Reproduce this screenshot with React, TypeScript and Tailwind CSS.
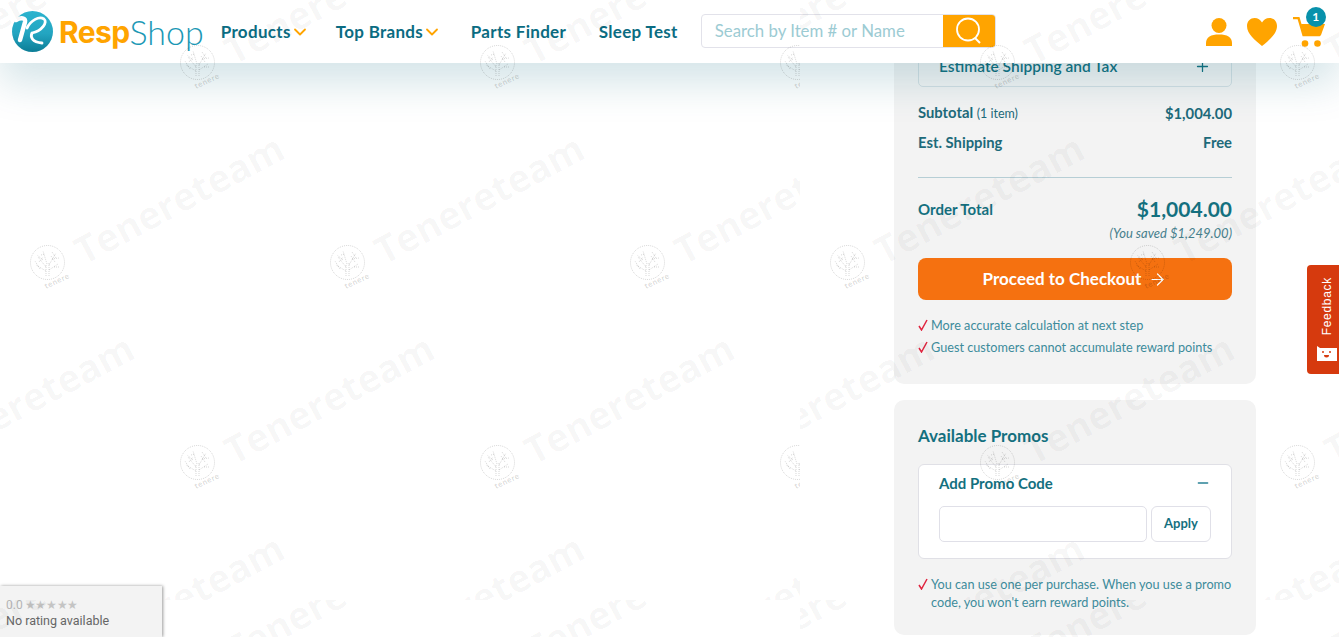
import { ChevronDown, Plus, Minus, ArrowRight } from "lucide-react";

const sans = "font-['Lato','Open_Sans',sans-serif]";

// watermark spots inside one 800x600 tile (logo top-left corner)
const marks = [
  { x: -120, y: 45 }, { x: 180, y: 45 }, { x: 480, y: 45 }, { x: 780, y: 45 },
  { x: 30, y: 245 }, { x: 330, y: 245 }, { x: 630, y: 245 },
  { x: -120, y: 445 }, { x: 180, y: 445 }, { x: 480, y: 445 }, { x: 780, y: 445 },
  { x: 30, y: 645 }, { x: 330, y: 645 }, { x: 630, y: 645 },
];
const tiles = [
  { x: 0, y: 0 }, { x: 800, y: 0 }, { x: 0, y: 600 }, { x: 800, y: 600 },
];

const WatermarkLogo = () => (
  <svg width="44" height="46" viewBox="0 0 44 46" fill="none" stroke="#000" strokeOpacity="0.2" strokeWidth="0.8" strokeDasharray="1 1">
    <circle cx="17.5" cy="17.5" r="17" />
    <path d="M16 31V19M19 31V18M16 22L8 12M17 19L13 6M19 20L26 8M13 15L7 10M22 14L29 13M19 25L28 19M16 26L6 20M10 24L5 16M24 22L30 22M11 10L15 9M22 7L26 13M9 17L13 12M25 17L21 11" />
    <text x="16" y="44" transform="rotate(-25 16 44)" fontSize="8" fontWeight="700" stroke="none" fill="#000" fillOpacity="0.16" fontFamily="Lato" letterSpacing="0.6">
      tenere
    </text>
  </svg>
);

const Watermarks = () => (
  <div className="pointer-events-none absolute inset-0 z-50 overflow-hidden">
    {tiles.map((t) => (
      <div key={`${t.x}-${t.y}`} className="absolute h-[600px] w-[800px] overflow-hidden" style={{ left: t.x, top: t.y }}>
        {marks.map((m) => (
          <div key={`${m.x}-${m.y}`} className="absolute" style={{ left: m.x, top: m.y }}>
            <WatermarkLogo />
            <span className="absolute left-[56px] top-[-15px] origin-bottom-left -rotate-[28deg] whitespace-nowrap font-['Open_Sans',sans-serif] text-[38px] font-bold leading-[40px] text-black/[0.035]">
              Tenereteam
            </span>
          </div>
        ))}
      </div>
    ))}
  </div>
);

const Logo = () => (
  <div className="flex items-center">
    <svg width="41" height="41" viewBox="0 0 41 41" className="shrink-0">
      <defs>
        <linearGradient id="lg" x1="0" y1="0" x2="0" y2="1">
          <stop offset="0" stopColor="#2cb4cf" />
          <stop offset="0.55" stopColor="#23a5c1" />
          <stop offset="1" stopColor="#0c7d96" />
        </linearGradient>
      </defs>
      <circle cx="20.5" cy="20.5" r="20.5" fill="url(#lg)" />
      <path d="M4 9C9 6 14 7 13 11L8 29" fill="none" stroke="#fff" strokeWidth="4.5" strokeLinecap="round" />
      <path d="M15 17C19 9 27 5 32 8C36 11 30 20 20 22C18 26 20 31 30 32" fill="none" stroke="#fff" strokeWidth="2.8" strokeLinecap="round" />
    </svg>
    <span className="ml-[6px] font-['Inter',sans-serif] text-[30px] font-bold leading-none tracking-[-0.6px] text-[#ffa400]">Resp</span>
    <span className="font-['Lato',sans-serif] text-[34px] font-light leading-none text-[#1b98b5]">Shop</span>
  </div>
);

const NavItem = ({ label, arrow, className }: { label: string; arrow?: boolean; className: string }) => (
  <a className={`flex items-center text-[17px] font-bold tracking-[0.3px] text-[#0b6c82] ${className}`}>
    {label}
    {arrow && <ChevronDown size={20} strokeWidth={2.2} className="ml-[-1px] text-[#ffa400]" />}
  </a>
);

const Header = () => (
  <header className="absolute inset-x-0 top-0 z-40 flex h-[63px] items-center bg-white pl-[12px] shadow-[0_20px_40px_rgba(0,97,124,0.173)]">
    <Logo />
    <nav className="ml-[17px] flex items-center">
      <NavItem label="Products" arrow className="w-[115px]" />
      <NavItem label="Top Brands" arrow className="w-[135px]" />
      <NavItem label="Parts Finder" className="w-[128px]" />
      <NavItem label="Sleep Test" className="w-[102px]" />
    </nav>
    <div className="mb-[2px] flex h-[34px] w-[295px] overflow-hidden rounded-[4px] border border-[#e2e2ea]">
      <div className="flex-1 pl-[13px] text-[16.8px] leading-[32px] text-[#9ccbd3]">Search by Item # or Name</div>
      <div className="flex w-[52px] items-center justify-center bg-[#ffa400]">
        <svg width="30" height="30" viewBox="0 0 30 30" fill="none" stroke="#fff" strokeWidth="1.8">
          <circle cx="14" cy="13.5" r="11" />
          <path d="M21 22l5 5" strokeWidth="2" />
        </svg>
      </div>
    </div>
    <div className="ml-[210px] flex items-center">
      <svg width="26" height="28" viewBox="0 0 26 28" fill="#ffa400">
        <circle cx="13" cy="7.5" r="7.5" />
        <path d="M0 28v-3C0 19 5 16.5 13 16.5S26 19 26 25v3z" />
      </svg>
      <svg width="30" height="28" viewBox="0 0 30 28" fill="#ffa400" className="ml-[15px]">
        <path d="M15 28C8 22 0 16 0 8c0-5 3.500-8 7.500-8C11 0 13.500 2 15 4.500 16.500 2 19 0 22.500 0 26.500 0 30 3 30 8c0 8-8 14-15 20z" />
      </svg>
      <div className="relative ml-[16px] h-[30px] w-[32px]">
        <svg width="32" height="30" viewBox="0 0 32 30" fill="#ffa400">
          <path d="M0 1h5.500l5 17h16" fill="none" stroke="#ffa400" strokeWidth="2.4" strokeLinecap="round" />
          <path d="M8 7h24l-4 11H11z" />
          <circle cx="12" cy="26.500" r="3.300" />
          <circle cx="24.500" cy="26.500" r="3.300" />
        </svg>
        <span className="absolute right-[-1px] top-[-10px] flex h-[20px] w-[20px] items-center justify-center rounded-full bg-[#0891ab] text-[12px] font-bold text-white">1</span>
      </div>
    </div>
  </header>
);

const Tick = ({ text }: { text: React.ReactNode }) => (
  <div className="flex text-[12.7px] leading-[18px] text-[#3d8b9b]">
    <svg width="10" height="12" viewBox="0 0 10 12" fill="none" stroke="#e0243f" strokeWidth="1.5" className="mr-[3px] mt-[3px] shrink-0">
      <path d="M1 7l2.500 4L9 1" />
    </svg>
    <span>{text}</span>
  </div>
);

const Summary = () => (
  <section className="h-[364px] rounded-[10px] bg-[#f3f3f3] px-[24px]">
    <div className="flex h-[67px] items-end justify-between rounded-b-[5px] border border-[#d4dfe3] px-[20px] pb-[10px] text-[15.500px] font-semibold leading-[20px] text-[#14707f]">
      Estimate Shipping and Tax
      <Plus size={17} strokeWidth={1.8} className="mb-[1px]" />
    </div>
    <div className="mt-[15px] flex items-center justify-between text-[14.800px] font-bold leading-[20px] text-[#1d6a7a]">
      <span>Subtotal <span className="text-[12.500px] font-normal">(1 item)</span></span>
      <span>$1,004.00</span>
    </div>
    <div className="mt-[8px] flex items-center justify-between text-[14.800px] font-bold leading-[20px] text-[#1d6a7a]">
      <span>Est. Shipping</span>
      <span>Free</span>
    </div>
    <div className="mt-[25px] h-px bg-[#b6ced5]" />
    <div className="mt-[18px] flex items-center justify-between text-[#14707f]">
      <span className="text-[15px] font-bold">Order Total</span>
      <span className="text-[21px] font-bold leading-[26px]">$1,004.00</span>
    </div>
    <div className="mt-[3px] text-right text-[13px] italic leading-[16px] text-[#47808d]">(You saved $1,249.00)</div>
    <button className="mt-[17px] flex h-[42px] w-full items-center justify-center rounded-[8px] bg-[#f57110] text-[17px] font-bold text-white">
      Proceed to Checkout
      <ArrowRight size={19} strokeWidth={1.5} className="ml-[7px]" />
    </button>
    <div className="mt-[16px] flex flex-col gap-[4px]">
      <Tick text="More accurate calculation at next step" />
      <Tick text="Guest customers cannot accumulate reward points" />
    </div>
  </section>
);

const Promos = () => (
  <section className="mt-[16px] h-[235px] rounded-[10px] bg-[#f3f3f3] px-[24px] pt-[26px]">
    <h2 className="text-[17px] font-bold leading-[20px] text-[#14707f]">Available Promos</h2>
    <div className="mt-[18px] h-[95px] rounded-[6px] border border-[#e0e0e6] bg-white px-[20px] pt-[8px]">
      <div className="flex items-center justify-between text-[15px] font-bold leading-[20px] text-[#14707f]">
        Add Promo Code
        <Minus size={16} strokeWidth={2} className="text-[#2a8296]" />
      </div>
      <div className="mt-[13px] flex gap-[4px]">
        <input className="h-[36px] w-[208px] rounded-[5px] border border-[#e0e0e8] bg-white" />
        <button className="h-[36px] w-[60px] rounded-[6px] border border-[#e0e0e8] text-[13px] font-bold text-[#14707f]">Apply</button>
      </div>
    </div>
    <div className="mt-[16px]">
      <Tick text="You can use one per purchase. When you use a promo code, you won't earn reward points." />
    </div>
  </section>
);

const FeedbackTab = () => (
  <div className="absolute right-0 top-[265px] z-30 flex h-[109px] w-[32px] flex-col items-center rounded-l-[4px] bg-[#d63a0e] text-white">
    <span className="ml-[7px] mt-[12px] font-['Liberation_Sans',sans-serif] text-[12px] leading-[14px] tracking-[0.7px] [writing-mode:vertical-rl] rotate-180">Feedback</span>
    <svg width="20" height="15" viewBox="0 0 20 15" className="ml-[7px] mt-[11px]">
      <path d="M0 0l3 2h17v13H3v0H0z" fill="#fff" />
      <circle cx="6" cy="6" r="1" fill="#d63a0e" />
      <circle cx="13" cy="6" r="1" fill="#d63a0e" />
      <path d="M7 9h5a2.500 2.500 0 01-5 0z" fill="#d63a0e" />
    </svg>
  </div>
);

const RatingBadge = () => (
  <div className="absolute bottom-0 left-0 z-30 h-[51px] w-[162px] bg-[#f3f3f3] pl-[6px] pt-[12px] font-['Roboto',sans-serif] shadow-[1px_0_3px_rgba(0,0,0,0.4)]">
    <div className="flex items-center text-[12px] leading-[14px] text-[#b5b5b5]">
      0.0
      <span className="ml-[2px] text-[12px] leading-[14px] tracking-[-0.3px] text-[#c4c4c4]">★★★★★</span>
    </div>
    <div className="text-[12.500px] leading-[18px] text-[#666]">No rating available</div>
  </div>
);

export default function App() {
  return (
    <div className={`relative h-[637px] w-[1339px] overflow-hidden bg-white ${sans}`}>
      <Header />
      <main className="flex justify-end pr-[83px] pt-[20px]">
        <aside className="w-[362px]">
          <Summary />
          <Promos />
        </aside>
      </main>
      <FeedbackTab />
      <RatingBadge />
      <Watermarks />
    </div>
  );
}
